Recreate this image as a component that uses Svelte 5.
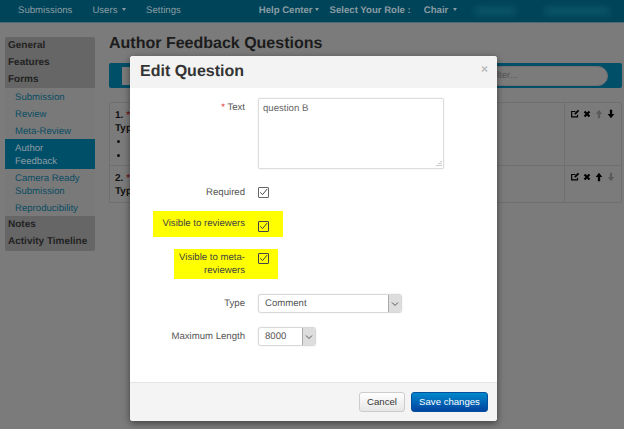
<script>
  const sideTop = ['General', 'Features', 'Forms'];
  const sideForms = ['Submission', 'Review', 'Meta-Review'];
</script>

<div class="page">
  <header class="navbar">
    <nav class="nav-left">
      <span>Submissions</span>
      <span>Users <i class="caret"></i></span>
      <span>Settings</span>
    </nav>
    <nav class="nav-right">
      <b class="help">Help Center<i class="caret"></i></b>
      <b class="role">Select Your Role :</b>
      <b class="chair">Chair <i class="caret"></i></b>
      <span class="blur b1"></span>
      <span class="blur b2"></span>
    </nav>
  </header>

  <div class="content">
    <aside class="sidebar">
      {#each sideTop as item}
        <div class="head">{item}</div>
      {/each}
      <div class="sub">
        {#each sideForms as item}
          <div class="link">{item}</div>
        {/each}
        <div class="link active">Author<br />Feedback</div>
        <div class="link">Camera Ready<br />Submission</div>
        <div class="link">Reproducibility</div>
      </div>
      <div class="head">Notes</div>
      <div class="head">Activity Timeline</div>
    </aside>

    <main class="main">
      <h1>Author Feedback Questions</h1>
      <div class="toolbar">
        <div class="btn-stub"></div>
        <div class="filter">Filter...</div>
      </div>
      <div class="table">
        <div class="tr first">
          <div class="q">
            <div><b>1. <span class="req">*</span></b></div>
            <div><b>Type</b></div>
            <ul><li></li><li></li></ul>
          </div>
          <div class="actions">
            <svg viewBox="0 0 12 12" class="ic"><path d="M9 7v2.5H2V3h4.5" fill="none" stroke="#000" stroke-width="1.4"/><path d="M5 5.5l1.5 1.5L11 2.5 9.5 1z" /></svg>
            <svg viewBox="0 0 12 12" class="ic"><path d="M3 3l6 6M9 3l-6 6" stroke="#000" stroke-width="2.6" /></svg>
            <svg viewBox="0 0 12 12" class="ic off"><path d="M6 1l4 5H7.4v5H4.6V6H2z" /></svg>
            <svg viewBox="0 0 12 12" class="ic"><path d="M6 11l4-5H7.4V1H4.6v5H2z" /></svg>
          </div>
        </div>
        <div class="tr second">
          <div class="q">
            <div><b>2. <span class="req">*</span></b></div>
            <div><b>Type</b></div>
          </div>
          <div class="actions">
            <svg viewBox="0 0 12 12" class="ic"><path d="M9 7v2.5H2V3h4.5" fill="none" stroke="#000" stroke-width="1.4"/><path d="M5 5.5l1.5 1.5L11 2.5 9.5 1z" /></svg>
            <svg viewBox="0 0 12 12" class="ic"><path d="M3 3l6 6M9 3l-6 6" stroke="#000" stroke-width="2.6" /></svg>
            <svg viewBox="0 0 12 12" class="ic"><path d="M6 1l4 5H7.4v5H4.6V6H2z" /></svg>
            <svg viewBox="0 0 12 12" class="ic off"><path d="M6 11l4-5H7.4V1H4.6v5H2z" /></svg>
          </div>
        </div>
      </div>
    </main>
  </div>

  <div class="modal">
    <div class="modal-head">
      <h2>Edit Question</h2>
      <span class="close">×</span>
    </div>
    <div class="modal-body">
      <div class="row text-row">
        <label for="qtext"><span class="star">*</span> Text</label>
        <div class="textarea" id="qtext">question B
          <svg class="grip" viewBox="0 0 7 7"><path d="M6 1v1M6 3v1M4 3v1M6 5v1M4 5v1M2 5v1" stroke="#999" stroke-width="1" /></svg>
        </div>
      </div>
      <div class="row check-row">
        <span class="lab">Required</span>
        <span class="check">
          <svg viewBox="0 0 10 10"><path d="M1.5 4.8l2.4 2.6L9 1.2" fill="none" stroke="#444" stroke-width="1.1" /></svg>
        </span>
      </div>
      <div class="hl one">
        <span class="lab">Visible to reviewers</span>
        <span class="check dark">
          <svg viewBox="0 0 10 10"><path d="M1.5 4.8l2.4 2.6L9 1.2" fill="none" stroke="#444" stroke-width="1.1" /></svg>
        </span>
      </div>
      <div class="hl two">
        <span class="lab">Visible to meta-<br />reviewers</span>
        <span class="check dark">
          <svg viewBox="0 0 10 10"><path d="M1.5 4.8l2.4 2.6L9 1.2" fill="none" stroke="#444" stroke-width="1.1" /></svg>
        </span>
      </div>
      <div class="row select-row type">
        <span class="lab">Type</span>
        <div class="select wide">
          <span>Comment</span>
          <span class="arrow"><svg viewBox="0 0 8 6"><path d="M1 1.5l3 3 3-3" fill="none" stroke="#555" stroke-width="1" /></svg></span>
        </div>
      </div>
      <div class="row select-row maxlen">
        <span class="lab">Maximum Length</span>
        <div class="select narrow">
          <span>8000</span>
          <span class="arrow"><svg viewBox="0 0 8 6"><path d="M1 1.5l3 3 3-3" fill="none" stroke="#555" stroke-width="1" /></svg></span>
        </div>
      </div>
    </div>
    <div class="modal-foot">
      <button class="cancel">Cancel</button>
      <button class="save">Save changes</button>
    </div>
  </div>
</div>

<style>
  :global(body) {
    margin: 0;
    background: #7b7b7b;
  }

  .page {
    position: relative;
    width: 624px;
    height: 429px;
    overflow: hidden;
    font-family: "Liberation Sans", Arial, sans-serif;
    font-size: 9.6px;
    text-rendering: geometricPrecision;
    color: #555;
    background: #7b7b7b;
  }

  /* Underlying page, already dimmed by the dialog's backdrop */
  .navbar {
    height: 23px;
    background: #004459;
    border-bottom: 1px solid #4a6a75;
    display: flex;
    justify-content: space-between;
    align-items: center;
    color: #8a9ca3;
    line-height: 20px;
    box-sizing: border-box;
  }

  .nav-left {
    display: flex;
    gap: 20px;
    padding-left: 18px;
  }

  .nav-right {
    display: flex;
    align-items: center;
    padding-right: 15px;
  }

  .help {
    margin-right: 11px;
  }

  .role {
    margin-right: 13px;
  }

  .chair {
    margin-right: 18px;
  }

  .caret {
    display: inline-block;
    width: 0;
    height: 0;
    margin: 0 0 2px 2px;
    border-left: 2.5px solid transparent;
    border-right: 2.5px solid transparent;
    border-top: 3px solid #8a9ca3;
  }

  .blur {
    display: block;
    height: 8px;
    background: #0c5468;
    filter: blur(3px);
  }

  .b1 {
    width: 40px;
    margin-right: 30px;
  }

  .b2 {
    width: 64px;
  }

  .content {
    display: flex;
    padding: 14px 2px 0 5px;
    gap: 14px;
  }

  .sidebar {
    width: 90px;
    flex-shrink: 0;
    background: #666;
    border-radius: 2px;
    overflow: hidden;
    padding-bottom: 1px;
  }

  .head {
    font-size: 10px;
    font-weight: bold;
    color: #222;
    height: 17px;
    line-height: 17px;
    padding-left: 3px;
  }

  .sub {
    background: #797979;
    color: #0b4d63;
  }

  .link {
    padding: 3px 3px 1px 10px;
    line-height: 13px;
  }

  .link.active {
    background: #004f69;
    color: #8a9ca3;
  }

  .main {
    flex: 1;
    min-width: 0;
  }

  h1 {
    margin: 0;
    font-size: 16px;
    line-height: 14px;
    font-weight: bold;
    color: #1c1c1c;
    height: 26px;
  }

  .toolbar {
    height: 25px;
    background: #004f69;
    border-radius: 2px;
    display: flex;
    align-items: center;
    justify-content: space-between;
    padding: 0 14px 0 13px;
  }

  .btn-stub {
    width: 40px;
    height: 18px;
    background: #7b7b7b;
  }

  .filter {
    width: 300px;
    height: 20px;
    box-sizing: border-box;
    background: #7b7b7b;
    border-radius: 10px;
    color: #555;
    line-height: 18px;
    text-align: left;
    padding-left: 180px;
    border: 1px solid #6f6f6f;
  }

  .table {
    margin-top: 14px;
    border: 1px solid #6f6f6f;
    border-radius: 2px;
    color: #111;
  }

  .tr {
    display: flex;
    box-sizing: border-box;
  }

  .first {
    height: 63px;
    border-bottom: 1px solid #6f6f6f;
  }

  .second {
    height: 36px;
  }

  .q {
    flex: 1;
    padding: 6px 5px;
    font-size: 10px;
    line-height: 13px;
  }

  .req {
    color: #701a1a;
  }

  .q ul {
    margin: 0;
    padding-left: 14px;
  }

  .q li {
    height: 14px;
    line-height: 14px;
  }

  .actions {
    width: 57px;
    border-left: 1px solid #6f6f6f;
    display: flex;
    gap: 2px;
    padding: 6px 0 0 5px;
    box-sizing: border-box;
    align-items: flex-start;
  }

  .ic {
    width: 10px;
    height: 10px;
  }

  .ic.off {
    opacity: 0.25;
  }

  /* Dialog */
  .modal {
    position: absolute;
    left: 130px;
    top: 56px;
    width: 367px;
    height: 365px;
    background: #fff;
    border-radius: 3px;
    box-shadow: 0 2px 7px rgba(0, 0, 0, 0.5);
    display: flex;
    flex-direction: column;
    overflow: hidden;
  }

  .modal-head {
    height: 32px;
    background: #f3f3f3;
    display: flex;
    justify-content: space-between;
    padding: 0 9px 0 10px;
    flex-shrink: 0;
  }

  h2 {
    margin: 0;
    font-size: 16px;
    line-height: 31px;
    color: #333;
    font-weight: bold;
  }

  .close {
    color: #bbb;
    font-weight: bold;
    font-size: 12px;
    line-height: 26px;
  }

  .modal-body {
    flex: 1;
    padding-top: 10px;
  }

  .row {
    display: grid;
    grid-template-columns: 115px auto;
    column-gap: 13px;
    justify-content: start;
  }

  .row label,
  .lab {
    text-align: right;
    line-height: 13px;
    color: #555;
  }

  .text-row label {
    padding-top: 3px;
  }

  .star {
    color: #d33;
  }

  .textarea {
    position: relative;
    width: 186px;
    height: 71px;
    box-sizing: border-box;
    border: 1px solid #ddd;
    border-radius: 2px;
    padding: 3px 4px;
    color: #666;
    line-height: 13px;
    box-shadow: 0 0 1px #bbb;
    white-space: pre-line;
  }

  .grip {
    position: absolute;
    right: 1px;
    bottom: 1px;
    width: 7px;
    height: 7px;
  }

  .check-row {
    margin-top: 18px;
    grid-template-rows: 11px;
    align-items: center;
  }

  .check-row .lab {
    margin-bottom: 1px;
  }

  .check {
    display: block;
    box-sizing: border-box;
    width: 11px;
    height: 11px;
    border: 1px solid #666;
    border-radius: 1px;
    background: #fff;
  }

  .check svg {
    display: block;
    width: 9px;
    height: 9px;
  }

  .check.dark {
    background: transparent;
    border-color: #444;
  }

  .hl {
    display: grid;
    column-gap: 13px;
    background: #ffff00;
    justify-content: start;
  }

  .hl .lab {
    color: #444;
  }

  .one {
    margin: 13px 0 0 23px;
    width: 130px;
    height: 26px;
    grid-template-columns: 92px auto;
    grid-template-rows: 26px;
    align-items: center;
  }

  .one .lab {
    margin-bottom: 1px;
  }

  .one .check {
    margin-top: 5px;
  }

  .two {
    margin: 12px 0 0 44px;
    width: 104px;
    height: 30px;
    grid-template-columns: 71px auto;
    align-items: start;
    padding-top: 2px;
    box-sizing: border-box;
  }

  .two .check {
    margin-top: 2px;
  }

  .select-row {
    align-items: center;
  }

  .type {
    margin-top: 15px;
  }

  .maxlen {
    margin-top: 14px;
  }

  .select {
    height: 19px;
    box-sizing: border-box;
    border: 1px solid #d8d8d8;
    border-radius: 3px;
    box-shadow: 0 0 1px #bbb;
    display: flex;
    justify-content: space-between;
    align-items: stretch;
    padding-left: 6px;
    line-height: 18px;
    color: #555;
  }

  .wide {
    width: 144px;
  }

  .narrow {
    width: 58px;
  }

  .arrow {
    width: 12px;
    background: #ddd;
    border-left: 1px solid #aaa;
    display: flex;
    align-items: center;
    justify-content: center;
    border-radius: 0 2px 2px 0;
  }

  .arrow svg {
    width: 8px;
    height: 6px;
  }

  .modal-foot {
    height: 39px;
    box-sizing: border-box;
    background: #f4f4f4;
    border-top: 1px solid #e5e5e5;
    display: flex;
    justify-content: flex-end;
    align-items: flex-start;
    gap: 6px;
    padding: 9px 9px 0 0;
  }

  button {
    font: inherit;
    height: 20px;
    padding: 0;
    border-radius: 3px;
    line-height: 18px;
  }

  .cancel {
    width: 46px;
    border: 1px solid #ccc;
    background: linear-gradient(#fff, #e6e6e6);
    color: #333;
  }

  .save {
    width: 77px;
    border: 1px solid #04519b;
    background: linear-gradient(#0088cc, #0044a0);
    color: #fff;
  }
</style>
